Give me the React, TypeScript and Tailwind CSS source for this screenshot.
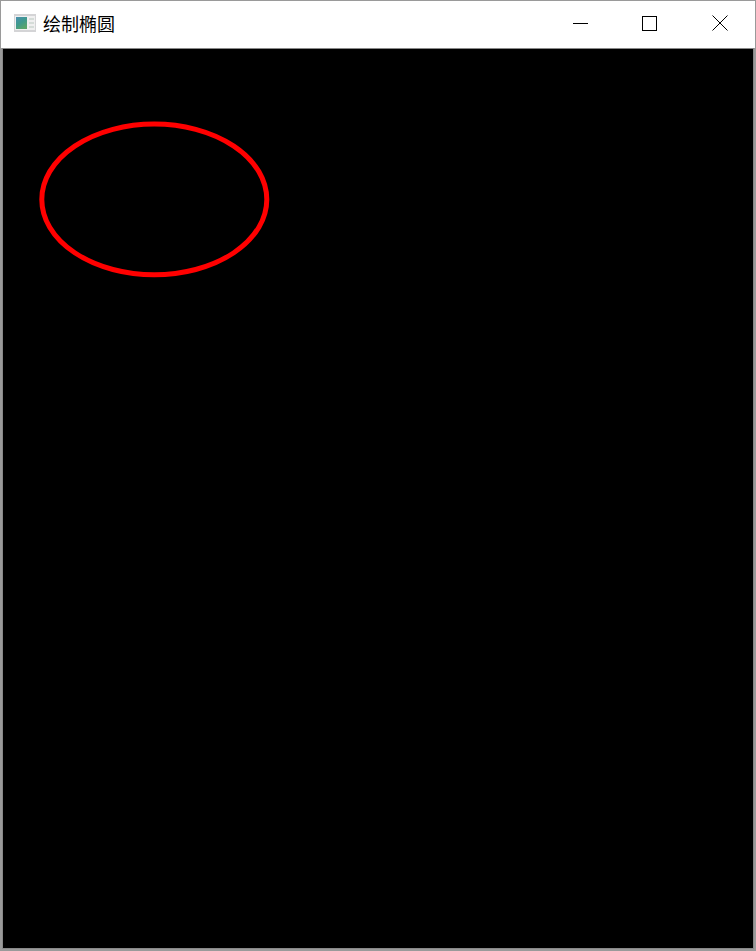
export default function App() {
  return (
    <div className="w-[756px] h-[951px] flex flex-col bg-[#9a9a9a] pl-[2px] pr-[2px] pt-px pb-[2px] overflow-hidden">
      <div className="h-[47px] shrink-0 bg-white flex items-center pl-[13px] pb-[3px] -mx-px">
        <svg width="22" height="18" viewBox="0 0 22 18" className="shrink-0">
          <rect x="0" y="0" width="22" height="18" fill="#d4d4d6" />
          <rect x="1" y="2" width="20" height="14" fill="#f0f0f0" />
          <defs>
            <linearGradient id="g" x1="0" y1="0" x2="0.6" y2="1">
              <stop offset="0" stopColor="#4a8fb0" />
              <stop offset="0.55" stopColor="#3f9a8c" />
              <stop offset="1" stopColor="#5aa56a" />
            </linearGradient>
          </defs>
          <rect x="2" y="3" width="11" height="12" fill="url(#g)" />
          <rect x="15" y="4" width="5" height="2" fill="#d5dcd8" />
          <rect x="15" y="8" width="5" height="2" fill="#d5dcd8" />
          <rect x="15" y="12" width="5" height="2" fill="#d5dcd8" />
        </svg>
        <span className="ml-[7px] text-[18px] leading-none text-black font-['Noto_Sans_CJK_SC',sans-serif]">绘制椭圆</span>
        <div className="ml-auto flex items-center pr-[27px]">
          <svg width="15" height="15" viewBox="0 0 15 15" shapeRendering="crispEdges">
            <path d="M0 7.5H15" stroke="#000" strokeWidth="1" fill="none" />
          </svg>
          <svg width="15" height="15" viewBox="0 0 15 15" shapeRendering="crispEdges" className="ml-[54px]">
            <rect x="0.5" y="0.5" width="14" height="14" stroke="#000" strokeWidth="1" fill="none" />
          </svg>
          <svg width="16" height="16" viewBox="0 0 16 16" className="ml-[55px]">
            <path d="M0.5 0.5L15.5 15.5M15.5 0.5L0.5 15.5" stroke="#000" strokeWidth="1" fill="none" />
          </svg>
        </div>
      </div>
      <div className="flex-1 bg-black border border-[#888888] min-h-0">
        <svg width="751" height="901" viewBox="3 49 751 901" className="block">
          <ellipse cx="154.3" cy="199.4" rx="112.5" ry="75.4" fill="none" stroke="#ff0000" strokeWidth="5" />
        </svg>
      </div>
    </div>
  );
}
